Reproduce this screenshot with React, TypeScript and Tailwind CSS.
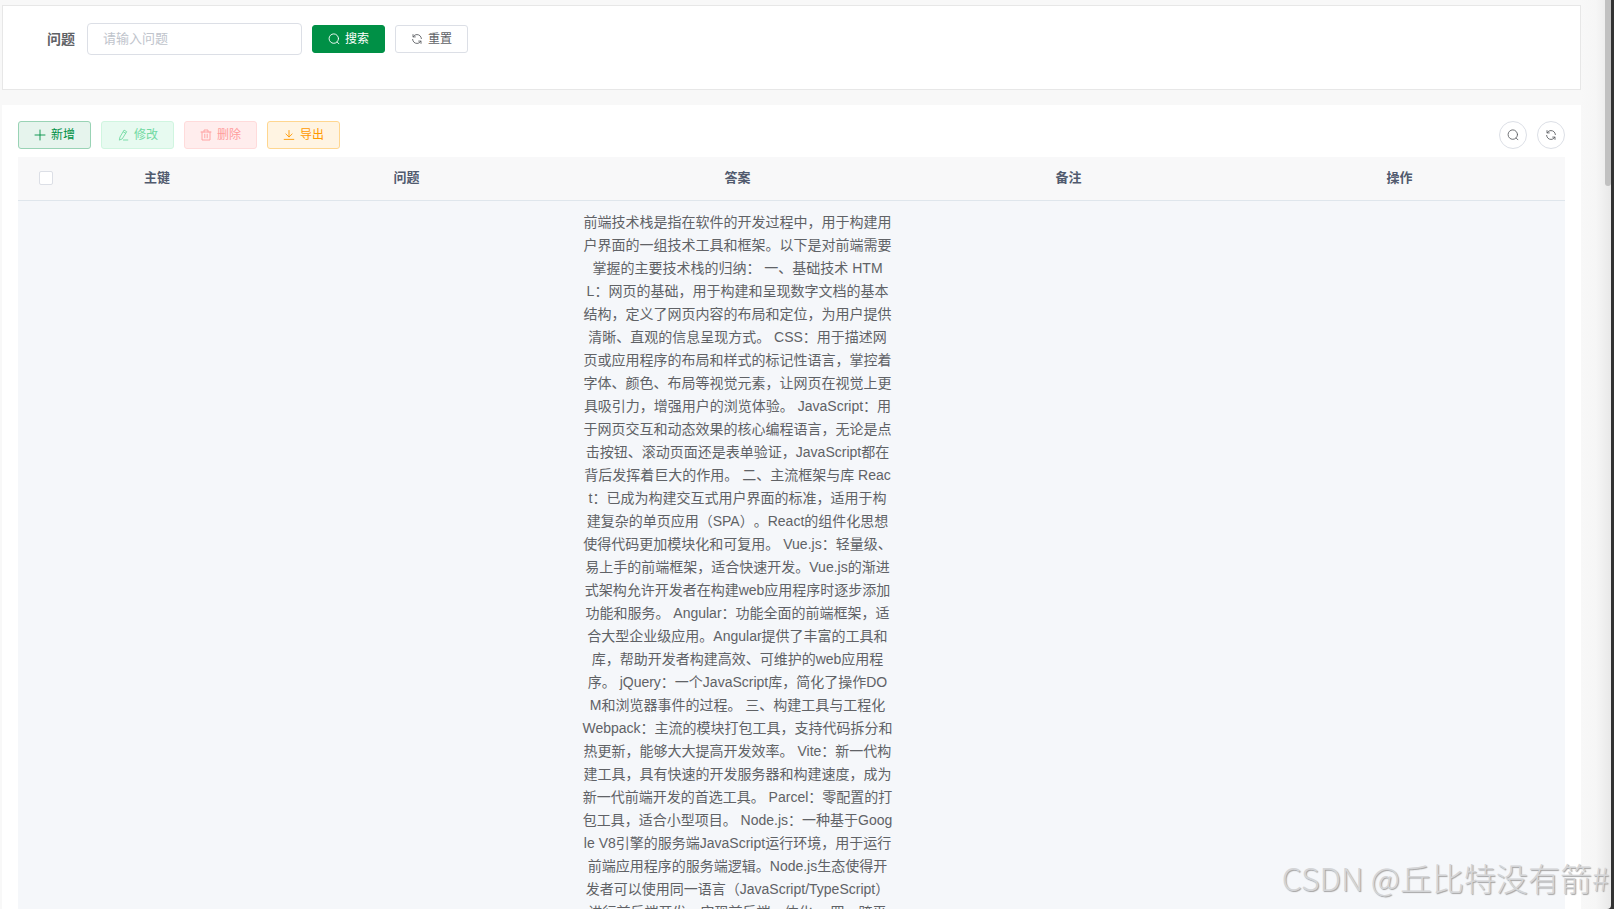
import { useState } from "react";
import type { ReactNode } from "react";
import clsx from "clsx";

const ANSWER =
  "前端技术栈是指在软件的开发过程中，用于构建用户界面的一组技术工具和框架。以下是对前端需要掌握的主要技术栈的归纳： 一、基础技术 HTML：网页的基础，用于构建和呈现数字文档的基本结构，定义了网页内容的布局和定位，为用户提供清晰、直观的信息呈现方式。 CSS：用于描述网页或应用程序的布局和样式的标记性语言，掌控着字体、颜色、布局等视觉元素，让网页在视觉上更具吸引力，增强用户的浏览体验。 JavaScript：用于网页交互和动态效果的核心编程语言，无论是点击按钮、滚动页面还是表单验证，JavaScript都在背后发挥着巨大的作用。 二、主流框架与库 React：已成为构建交互式用户界面的标准，适用于构建复杂的单页应用（SPA）。React的组件化思想使得代码更加模块化和可复用。 Vue.js：轻量级、易上手的前端框架，适合快速开发。Vue.js的渐进式架构允许开发者在构建web应用程序时逐步添加功能和服务。 Angular：功能全面的前端框架，适合大型企业级应用。Angular提供了丰富的工具和库，帮助开发者构建高效、可维护的web应用程序。 jQuery：一个JavaScript库，简化了操作DOM和浏览器事件的过程。 三、构建工具与工程化 Webpack：主流的模块打包工具，支持代码拆分和热更新，能够大大提高开发效率。 Vite：新一代构建工具，具有快速的开发服务器和构建速度，成为新一代前端开发的首选工具。 Parcel：零配置的打包工具，适合小型项目。 Node.js：一种基于Google V8引擎的服务端JavaScript运行环境，用于运行前端应用程序的服务端逻辑。Node.js生态使得开发者可以使用同一语言（JavaScript/TypeScript）进行前后端开发，实现前后端一体化。 四、跨平";

function Icon({ children }: { children: ReactNode }) {
  return (
    <svg
      viewBox="0 0 12 12"
      className="w-3 h-3 shrink-0"
      fill="none"
      stroke="currentColor"
      strokeWidth="0.9"
      strokeLinecap="round"
      strokeLinejoin="round"
      aria-hidden="true"
    >
      {children}
    </svg>
  );
}

const SearchIcon = () => (
  <Icon>
    <circle cx="5.8" cy="5.6" r="4.7" />
    <path d="M9.2 9.1l1.7 1.7" />
  </Icon>
);

const RefreshIcon = () => (
  <Icon>
    <path d="M2 1.6v2.3h2.3M2.2 3.8C3.2 2.2 4.5 1.6 6 1.6c2.3 0 4.2 1.6 4.4 4" />
    <path d="M10 10.4V8.1H7.7M9.8 8.2C8.8 9.8 7.5 10.4 6 10.4c-2.3 0-4.2-1.6-4.4-4" />
  </Icon>
);

const PlusIcon = () => (
  <Icon>
    <path d="M6 1v10M1 6h10" />
  </Icon>
);

const EditIcon = () => (
  <Icon>
    <path d="M7.4 1.3l2.3 1.4-4.5 7.2-2.9 1.2.6-2.7zM6.4 2.9l2.3 1.4M6.4 11h4.4" />
  </Icon>
);

const DeleteIcon = () => (
  <Icon>
    <path d="M1 3h10M4 3V1h4v2M2 3v8h8V3M4.8 5.2v3.6M7.2 5.2v3.6" />
  </Icon>
);

const DownloadIcon = () => (
  <Icon>
    <path d="M6 1.5v6.3M2.9 5L6 8l3.1-3M1.2 10.4h9.6" />
  </Icon>
);

type ButtonProps = {
  icon: ReactNode;
  label: string;
  className: string;
  disabled?: boolean;
  onClick?: () => void;
};

function SmallButton({ icon, label, className, disabled, onClick }: ButtonProps) {
  return (
    <button
      type="button"
      disabled={disabled}
      onClick={onClick}
      className={clsx(
        "flex items-center justify-center gap-[5px] w-[73px] h-7 rounded-[3px] border text-xs",
        className
      )}
    >
      {icon}
      <span>{label}</span>
    </button>
  );
}

function RoundButton({ icon, label }: { icon: ReactNode; label: string }) {
  return (
    <button
      type="button"
      aria-label={label}
      className="flex items-center justify-center w-7 h-7 rounded-full border border-[#dcdfe6] bg-white text-[#606266]"
    >
      {icon}
    </button>
  );
}

export default function App() {
  const [question, setQuestion] = useState("");

  return (
    <div className="relative flex h-screen overflow-hidden bg-[#f8f8f8] text-sm text-[#606266] [text-spacing-trim:space-all] font-['Liberation_Sans','Noto_Sans_CJK_SC',sans-serif]">
      <main className="flex-1 min-w-0 pl-[2px] pt-[5px]">
        <section className="h-[85px] border border-[#e7e7e7] bg-white pl-11 pt-[17px]">
          <form className="flex items-center gap-[10px]" onSubmit={(e) => e.preventDefault()}>
            <div className="flex items-center gap-3">
              <label htmlFor="question" className="font-bold">
                问题
              </label>
              <input
                id="question"
                value={question}
                onChange={(e) => setQuestion(e.target.value)}
                placeholder="请输入问题"
                className="w-[215px] h-8 rounded border border-[#dcdfe6] bg-white px-[15px] pb-[2px] text-[13px] outline-none placeholder:text-[#c0c4cc]"
              />
            </div>
            <SmallButton
              icon={<SearchIcon />}
              label="搜索"
              className="border-[#009046] bg-[#009046] text-white"
            />
            <SmallButton
              icon={<RefreshIcon />}
              label="重置"
              className="border-[#dcdfe6] bg-white"
              onClick={() => setQuestion("")}
            />
          </form>
        </section>

        <section className="mt-[15px] bg-white p-4">
          <div className="flex items-center justify-between mb-2">
            <div className="flex gap-[10px]">
              <SmallButton
                icon={<PlusIcon />}
                label="新增"
                className="border-[#99d3b5] bg-[#e6f4ed] text-[#009046]"
              />
              <SmallButton
                icon={<EditIcon />}
                label="修改"
                className="border-[#d0f5e0] bg-[#e7faf0] text-[#71d9a2]"
                disabled
              />
              <SmallButton
                icon={<DeleteIcon />}
                label="删除"
                className="border-[#ffdbdb] bg-[#ffeded] text-[#ff9c9c]"
                disabled
              />
              <SmallButton
                icon={<DownloadIcon />}
                label="导出"
                className="border-[#ffd68f] bg-[#fff4e2] text-[#ff9900]"
              />
            </div>
            <div className="flex gap-[10px]">
              <RoundButton icon={<SearchIcon />} label="搜索" />
              <RoundButton icon={<RefreshIcon />} label="刷新" />
            </div>
          </div>

          <table className="w-full table-fixed border-collapse text-center">
            <colgroup>
              <col className="w-[55px]" />
              <col className="w-[168px]" />
              <col />
              <col />
              <col />
              <col />
            </colgroup>
            <thead>
              <tr className="h-[43px] border-b border-[#dfe6ec] bg-[#f8f8f9] text-[13px] text-[#515a6e]">
                <th>
                  <input
                    type="checkbox"
                    aria-label="全选"
                    className="block mx-auto size-[14px] appearance-none rounded-[2px] border border-[#dcdfe6] bg-white"
                  />
                </th>
                <th>主键</th>
                <th>问题</th>
                <th>答案</th>
                <th>备注</th>
                <th>操作</th>
              </tr>
            </thead>
            <tbody>
              <tr className="bg-[#f5f7fa]">
                <td />
                <td />
                <td />
                <td className="p-[10px] leading-[23px] break-all">{ANSWER}</td>
                <td />
                <td />
              </tr>
            </tbody>
          </table>
        </section>
      </main>

      <aside className="w-[33px] shrink-0 bg-[#333333] pr-[3px]" aria-hidden="true">
        <div className="flex h-full justify-end rounded-br-[4px] bg-linear-to-r from-[#f8f8f8] via-[#f6f6f6] to-[#e8e8e8]">
          <div className="w-[6px] h-[186px] rounded-b-[3px] bg-[#c1c1c1]" />
        </div>
      </aside>

      <div className="absolute right-[5px] bottom-2 text-[32px] leading-[48px] whitespace-nowrap text-[#d4d5d7] [text-shadow:1px_1px_1px_#a3a3a3] font-['Noto_Sans_CJK_SC',sans-serif] font-light pointer-events-none">
        CSDN @丘比特没有箭#
      </div>
    </div>
  );
}
